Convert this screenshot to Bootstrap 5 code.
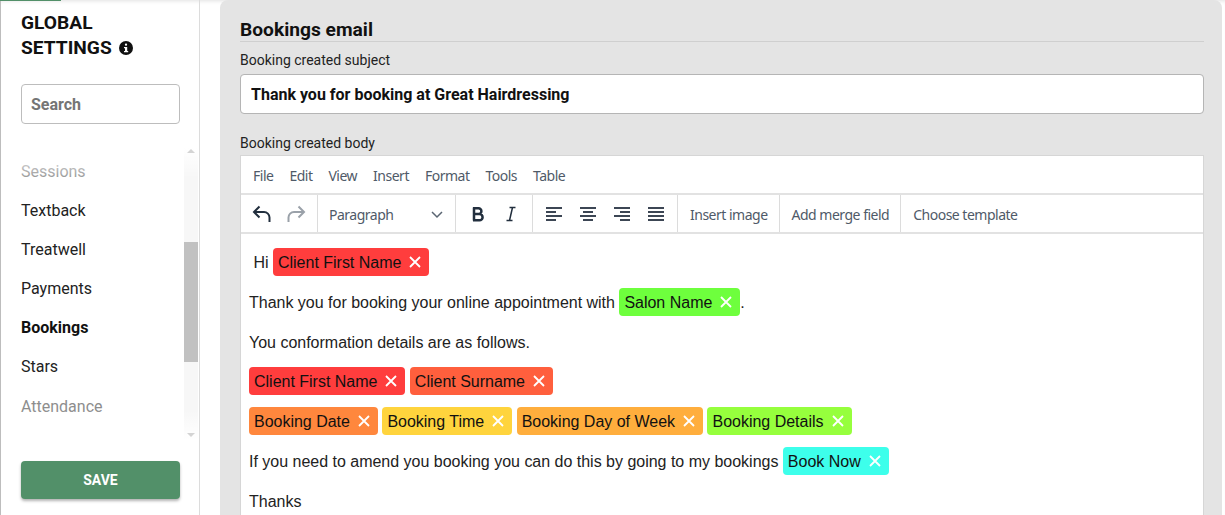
<!DOCTYPE html>
<html lang="en">
<head>
<meta charset="utf-8">
<title>Global settings</title>
<link href="https://cdn.jsdelivr.net/npm/bootstrap@5.3.0/dist/css/bootstrap.min.css" rel="stylesheet">
<style>
html,body{height:515px;overflow:hidden;background:#fff;}
body{font-family:Roboto,sans-serif;color:#111;}
.topbar{position:absolute;left:0;top:0;height:1px;width:61px;background:#529069;}
.shell{height:515px;box-shadow:inset 0 4px 4px -3px rgba(0,0,0,.12);}
.side{width:200px;flex:none;border-left:1px solid #bdbdbd;border-right:1px solid #dcdcdc;padding:10px 0 0 20px;}
.side-title{font-size:19.2px;line-height:25px;font-weight:700;color:#111;margin:0 0 24px;width:130px;}
.info{width:14px;height:14px;vertical-align:-1px;margin-left:2px;}
.side-search{width:159px;height:40px;border:1px solid #bdbdbd;border-radius:4px;font-size:16px;font-weight:700;padding:0 9px;color:#757575;}
.side-search::placeholder{color:#757575;opacity:1;}
.menu-wrap{height:292px;margin-top:24px;position:relative;}
.menu-list{width:163px;padding-top:3.5px;}
.menu-item{font-size:16px;line-height:39.2px;height:39.2px;color:#222;}
.menu-item.muted-top{color:#999;}
.menu-item.muted-bot{color:#8d8d8d;}
.menu-item.on{font-weight:700;color:#111;}
.track{width:14px;height:292px;background:#f7f7f7;padding-top:94px;position:relative;}
.thumb{height:120px;background:#c1c1c1;}
.arr{position:absolute;left:3px;width:0;height:0;border-left:4px solid transparent;border-right:4px solid transparent;z-index:2;}
.arr.up{top:1px;border-bottom:4px solid #d4d4d4;}
.arr.dn{bottom:3px;border-top:4px solid #d4d4d4;}
.fade-top,.fade-bot{position:absolute;left:0;width:178px;height:30px;pointer-events:none;}
.fade-top{top:0;background:linear-gradient(#fff,rgba(255,255,255,0));}
.fade-bot{bottom:0;background:linear-gradient(rgba(255,255,255,0),#fff);}
.save-btn{width:159px;height:38px;margin-top:21px;background:#529069;color:#fff;font-size:14px;font-weight:700;border:0;border-radius:4px;box-shadow:0 2px 3px rgba(0,0,0,.3);padding:0;}
.save-btn:hover{background:#529069;color:#fff;}
.main-col{padding-left:20px;width:1022px;flex:none;}
.panel{height:515px;background:#e4e4e4;border-radius:8px 8px 0 0;padding:18px 18px 0 20px;overflow:hidden;}
.panel-h{font-size:19.2px;line-height:23px;font-weight:700;color:#111;border-bottom:1px solid #cfcfcf;margin:0 0 8px;}
.fld-label{display:block;font-size:14px;line-height:20px;color:#222;margin:0 0 4px;}
.subject{height:40px;border:1px solid #b5b5b5;border-radius:4px;font-size:16px;font-weight:700;color:#111;padding:0 10px;margin-bottom:19px;}
.editor{background:#fff;border:1px solid #d6d6d6;border-bottom:0;height:362px;margin-top:-2px;font-family:"Noto Sans",sans-serif;color:#222f3e;letter-spacing:-.5px;}
.menubar{height:39px;border-bottom:2px solid #e2e2e2;padding:2px 0 0 12px;gap:16px;font-size:14px;color:#4f5a68;}
.toolbar{height:39px;border-bottom:2px solid #e2e2e2;font-size:14px;color:#4f5a68;}
.tgroup{height:37px;padding:0 4px;border-right:1px solid #dcdcdc;}
.tbtn{width:34px;height:37px;display:flex;align-items:center;justify-content:center;}
.para{width:138px;padding:2px 12px 0 11px;}
.txtbtn{padding:2px 11px 0 12px;}
.tgroup.last{border-right:0;}
.ed-body{padding:15px 8px 0 8px;font-family:"Liberation Sans",sans-serif;font-size:16px;color:#222;letter-spacing:-.01px;}
.ed-line{line-height:28px;height:28px;margin:0 0 11.75px;white-space:nowrap;}
.tok{display:inline-flex;align-items:center;height:28px;padding:2px 5px 0;margin-top:-1px;border-radius:4px;color:#111;vertical-align:top;}
.tok svg{width:12px;height:12px;margin-left:8px;margin-right:3px;margin-top:-2px;}
.t-red{background:#ff3d3d;}.t-sur{background:#ff5f3d;}.t-date{background:#ff873d;}.t-time{background:#ffd43d;}.t-dow{background:#ffae3d;}.t-det{background:#96ff3d;}.t-sal{background:#6eff3d;}.t-now{background:#3dffeb;}
</style>
</head>
<body class="m-0">
<div class="shell d-flex">
  <aside class="side d-flex flex-column">
    <h1 class="side-title">GLOBAL SETTINGS <svg class="info" viewBox="0 0 14 14"><circle cx="7" cy="7" r="7" fill="#111"/><rect x="5.900" y="2.600" width="2.200" height="2.200" rx="1" fill="#fff"/><path d="M5 6h3.200v4h1v1.300H5V10h1V7.300H5z" fill="#fff"/></svg></h1>
    <input class="side-search form-control" type="text" placeholder="Search">
    <div class="menu-wrap d-flex">
      <div class="menu-list">
        <div class="menu-item muted-top">Sessions</div>
        <div class="menu-item">Textback</div>
        <div class="menu-item">Treatwell</div>
        <div class="menu-item">Payments</div>
        <div class="menu-item on">Bookings</div>
        <div class="menu-item">Stars</div>
        <div class="menu-item muted-bot">Attendance</div>
      </div>
      <div class="track"><span class="arr up"></span><div class="thumb"></div><span class="arr dn"></span></div>
      <div class="fade-top"></div><div class="fade-bot"></div>
    </div>
    <button class="btn save-btn" type="button">SAVE</button>
  </aside>
  <main class="main-col">
    <div class="panel">
      <h2 class="panel-h">Bookings email</h2>
      <label class="fld-label">Booking created subject</label>
      <input class="form-control subject" type="text" value="Thank you for booking at Great Hairdressing">
      <label class="fld-label">Booking created body</label>
      <div class="editor">
        <div class="menubar d-flex align-items-center"><span>File</span><span>Edit</span><span>View</span><span>Insert</span><span>Format</span><span>Tools</span><span>Table</span></div>
        <div class="toolbar d-flex">
          <div class="tgroup d-flex">
            <span class="tbtn"><svg width="20" height="20" viewBox="0 0 20 20" fill="none" stroke="#222f3e" stroke-width="2"><path d="M7.500 2.500 2 8l5.500 5.500M2.500 8H12a5.500 5.500 0 0 1 5.500 5.500V18"/></svg></span>
            <span class="tbtn"><svg width="20" height="20" viewBox="0 0 20 20" fill="none" stroke="#9aa1a9" stroke-width="2"><path d="M12.500 2.500 18 8l-5.500 5.500M17.500 8H8a5.500 5.500 0 0 0-5.500 5.500V18"/></svg></span>
          </div>
          <div class="tgroup para d-flex align-items-center justify-content-between"><span>Paragraph</span><svg width="12" height="8" viewBox="0 0 12 8" fill="none" stroke="#5a6572" stroke-width="1.500"><path d="m1 1 5 5 5-5"/></svg></div>
          <div class="tgroup d-flex">
            <span class="tbtn"><svg width="15" height="16" viewBox="0 0 15 16" fill="none" stroke="#222f3e" stroke-width="2.500"><path d="M4 1.500v13M3 2.250h5.500a2.900 2.900 0 0 1 0 5.800H4h5.500a3.100 3.100 0 0 1 0 6.200H3"/></svg></span>
            <span class="tbtn"><svg width="12" height="16" viewBox="0 0 12 16" fill="none" stroke="#222f3e" stroke-width="1.500"><path d="M4.500 1.500h6M1.500 14.500h6M7.500 1.500l-3 13"/></svg></span>
          </div>
          <div class="tgroup d-flex">
            <span class="tbtn"><svg width="18" height="14" viewBox="0 0 18 14" fill="#3c4654"><path d="M1 0h16v2H1zM1 4h10v2H1zM1 8h16v2H1zM1 12h10v2H1z"/></svg></span>
            <span class="tbtn"><svg width="18" height="14" viewBox="0 0 18 14" fill="#3c4654"><path d="M1 0h16v2H1zM4 4h10v2H4zM1 8h16v2H1zM4 12h10v2H4z"/></svg></span>
            <span class="tbtn"><svg width="18" height="14" viewBox="0 0 18 14" fill="#3c4654"><path d="M1 0h16v2H1zM7 4h10v2H7zM1 8h16v2H1zM7 12h10v2H7z"/></svg></span>
            <span class="tbtn"><svg width="18" height="14" viewBox="0 0 18 14" fill="#3c4654"><path d="M1 0h16v2H1zM1 4h16v2H1zM1 8h16v2H1zM1 12h16v2H1z"/></svg></span>
          </div>
          <div class="tgroup txtbtn d-flex align-items-center">Insert image</div>
          <div class="tgroup txtbtn d-flex align-items-center">Add merge field</div>
          <div class="tgroup txtbtn last d-flex align-items-center">Choose template</div>
        </div>
        <div class="ed-body">
          <p class="ed-line">&nbsp;Hi <span class="tok t-red">Client First Name<svg viewBox="0 0 12 12" stroke="#fff" stroke-width="1.800"><path d="m1 1 10 10M11 1 1 11"/></svg></span></p>
          <p class="ed-line">Thank you for booking your online appointment with <span class="tok t-sal">Salon Name<svg viewBox="0 0 12 12" stroke="#fff" stroke-width="1.800"><path d="m1 1 10 10M11 1 1 11"/></svg></span>.</p>
          <p class="ed-line">You conformation details are as follows.</p>
          <p class="ed-line"><span class="tok t-red">Client First Name<svg viewBox="0 0 12 12" stroke="#fff" stroke-width="1.800"><path d="m1 1 10 10M11 1 1 11"/></svg></span> <span class="tok t-sur">Client Surname<svg viewBox="0 0 12 12" stroke="#fff" stroke-width="1.800"><path d="m1 1 10 10M11 1 1 11"/></svg></span></p>
          <p class="ed-line"><span class="tok t-date">Booking Date<svg viewBox="0 0 12 12" stroke="#fff" stroke-width="1.800"><path d="m1 1 10 10M11 1 1 11"/></svg></span> <span class="tok t-time">Booking Time<svg viewBox="0 0 12 12" stroke="#fff" stroke-width="1.800"><path d="m1 1 10 10M11 1 1 11"/></svg></span> <span class="tok t-dow">Booking Day of Week<svg viewBox="0 0 12 12" stroke="#fff" stroke-width="1.800"><path d="m1 1 10 10M11 1 1 11"/></svg></span> <span class="tok t-det">Booking Details<svg viewBox="0 0 12 12" stroke="#fff" stroke-width="1.800"><path d="m1 1 10 10M11 1 1 11"/></svg></span></p>
          <p class="ed-line">If you need to amend you booking you can do this by going to my bookings <span class="tok t-now">Book Now<svg viewBox="0 0 12 12" stroke="#fff" stroke-width="1.800"><path d="m1 1 10 10M11 1 1 11"/></svg></span></p>
          <p class="ed-line">Thanks</p>
        </div>
      </div>
    </div>
  </main>
</div>
<div class="topbar"></div>
<script src="https://cdn.jsdelivr.net/npm/bootstrap@5.3.0/dist/js/bootstrap.bundle.min.js"></script>
</body>
</html>
